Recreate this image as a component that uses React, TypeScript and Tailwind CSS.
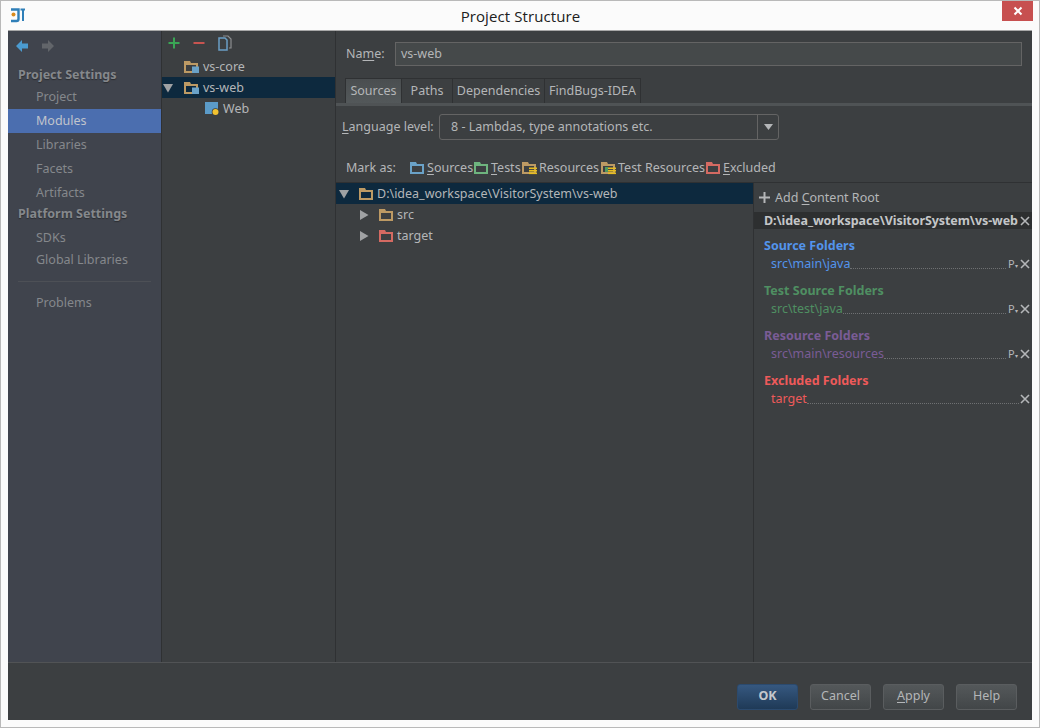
import React from "react";

const font = "[font-family:'Noto_Sans',sans-serif]";

function Folder({ color, kids }: { color: string; kids?: React.ReactNode }) {
  return (
    <svg width="16" height="14" viewBox="0 0 16 14" className="shrink-0">
      <path fillRule="evenodd" d="M0 1h6l1 2h7v10H0zM2 5v6h10V5z" fill={color} />
      {kids}
    </svg>
  );
}

const ModuleSquare = <rect x="8" y="6.5" width="7" height="6.5" fill="#6aa2c8" />;
const Stack = (
  <g fill="#e8bd20">
    <rect x="7" y="6.5" width="8" height="1.6" />
    <rect x="7" y="9" width="8" height="1.6" />
    <rect x="7" y="11.5" width="8" height="1.6" />
  </g>
);

function X({ className = "" }: { className?: string }) {
  return (
    <svg width="10" height="10" viewBox="0 0 10 10" className={"shrink-0 " + className}>
      <path d="M1 1l8 8M9 1l-8 8" stroke="#b4b6b8" strokeWidth="1.6" />
    </svg>
  );
}

function Arrow({ down = false }: { down?: boolean }) {
  return (
    <svg width="10" height="10" viewBox="0 0 10 10" className="shrink-0">
      {down ? <path d="M0 1h10L5 9.5z" fill="#a0a2a4" /> : <path d="M1 0v10L9.5 5z" fill="#a0a2a4" />}
    </svg>
  );
}

function U({ children }: { children: React.ReactNode }) {
  return <span className="underline underline-offset-2">{children}</span>;
}

function NavItem({ label, active }: { label: string; active?: boolean }) {
  return (
    <div className={"h-6 flex items-center pl-7 text-[12.5px] " + (active ? "bg-[#4b6eaf] text-[#c0c4cc]" : "text-[#85888c]")}>
      {label}
    </div>
  );
}

function Heading({ label }: { label: string }) {
  return (
    <div className="h-[21px] flex items-center pl-2.5 pt-[2px] text-[12.5px] font-bold text-[#85888c] [text-shadow:0_1px_1px_#2b2d31]">
      {label}
    </div>
  );
}

function Tab({ label, w, active }: { label: string; w: string; active?: boolean }) {
  return (
    <div
      className={
        "h-[25px] flex items-center justify-center border border-b-0 border-[#2f3133] -ml-px text-[12.5px] text-[#b4b6b8] " +
        w +
        (active ? " bg-gradient-to-b from-[#4a4e50] to-[#53585a]" : "")
      }
    >
      {label}
    </div>
  );
}

function Mark({ icon, children, w }: { icon: React.ReactNode; children: React.ReactNode; w: string }) {
  return (
    <div className={"flex items-center gap-[1px] " + w}>
      {icon}
      <span>{children}</span>
    </div>
  );
}

function FolderGroup({
  title,
  path,
  color,
  className,
  edit = true,
}: {
  title: string;
  path: string;
  color: string;
  className: string;
  edit?: boolean;
}) {
  return (
    <div className={"h-[45px] flex flex-col pl-[10px] pr-[2px] pt-[7px] " + className}>
      <div className={"h-[18px] flex items-center text-[12.5px] font-bold " + color}>{title}</div>
      <div className="h-[18px] flex items-center pl-[7px] text-[12.5px]">
        <span className={color}>{path}</span>
        <div className="flex-1 self-end mb-[4px] border-b border-dotted border-[#6e7072]" />
        {edit && (
          <span className="w-[13px] pb-[1px] text-[11px] leading-none text-[#b4b6b8] flex items-center pl-[2px]">
            P<span className="text-[6px] mt-1">▾</span>
          </span>
        )}
        <X className="ml-[1px] -mt-[1px]" />
      </div>
    </div>
  );
}

export default function App() {
  return (
    <div className={"w-[1040px] h-[728px] bg-[#fbfbfb] border border-[#b9b9b9] flex flex-col overflow-hidden " + font}>
      <div className="h-[29px] flex items-start shrink-0 relative">
        <svg width="16" height="16" viewBox="0 0 16 16" className="ml-[9px] mt-[6px]">
          <path d="M1 2.5h7.5V12q0 2-2 2H1" fill="none" stroke="#2f7fb8" strokeWidth="2.4" />
          <path d="M10.5 1.5H15v2h-1V14h-2V3.5h-1.5z" fill="#2f7fb8" />
          <circle cx="3.5" cy="7.5" r="2" fill="#d98a1c" />
        </svg>
        <div className="flex-1 text-center pt-[5px] pl-[13px] text-[15px] leading-[20px] tracking-[0.1px] text-[#202020] [font-family:'Open_Sans',sans-serif]">
          Project Structure
        </div>
        <div className="w-[31px] h-[20px] mr-[6px] bg-[#c75050] flex items-center justify-center">
          <svg width="10" height="10" viewBox="0 0 10 10">
            <path d="M1.5 1.5l7 7M8.5 1.5l-7 7" stroke="#fff" strokeWidth="2" />
          </svg>
        </div>
      </div>

      <div className="mx-[7px] mb-[7px] flex-1 min-h-0 flex flex-col bg-[#3c3f41] border-t border-[#a8a8a8] text-[#b4b6b8]">
        <div className="flex-1 min-h-0 flex">
          {/* settings nav */}
          <div className="w-[153px] bg-[#40444d] shrink-0 flex flex-col pt-[6px]">
            <div className="h-[17px] flex items-center gap-[12px] pl-[7px]">
              <svg width="14" height="14" viewBox="0 0 14 14">
                <path d="M7 1L1 7l6 6V9.5h6v-5H7z" fill="#4b9bd0" />
              </svg>
              <svg width="14" height="14" viewBox="0 0 14 14">
                <path d="M7 1l6 6-6 6V9.5H1v-5h6z" fill="#62656a" />
              </svg>
            </div>
            <div className="h-[10px]" />
            <Heading label="Project Settings" />
            <NavItem label="Project" />
            <NavItem label="Modules" active />
            <NavItem label="Libraries" />
            <NavItem label="Facets" />
            <NavItem label="Artifacts" />
            <div className="-mt-[2px]" />
            <Heading label="Platform Settings" />
            <div className="h-[2px]" />
            <NavItem label="SDKs" />
            <div className="-mt-[2px]" />
            <NavItem label="Global Libraries" />
            <div className="mx-[10px] mt-[9px] mb-[9px] border-t border-[#4d5056]" />
            <NavItem label="Problems" />
          </div>

          {/* modules */}
          <div className="w-[175px] shrink-0 border-x border-[#2f3133] flex flex-col">
            <div className="h-[25px] flex items-center pl-[5px] pb-[2px] gap-[11px] shrink-0">
              <svg width="14" height="14" viewBox="0 0 14 14">
                <path d="M7 1.5v11M1.5 7h11" stroke="#3aa655" strokeWidth="2" />
              </svg>
              <svg width="14" height="14" viewBox="0 0 14 14">
                <path d="M1.5 7h11" stroke="#c75450" strokeWidth="2" />
              </svg>
              <svg width="16" height="16" viewBox="0 0 16 16">
                <path d="M6 1h5l3 3v9h-2" fill="none" stroke="#8c8e90" strokeWidth="1.2" />
                <path d="M2 3h6l2 2v10H2z" fill="none" stroke="#6a9fc5" strokeWidth="1.5" />
              </svg>
            </div>
            <div className="h-[21px] flex items-center pl-[22px] gap-[2px] text-[12.5px]">
              <Folder color="#bd9a64" kids={ModuleSquare} />
              <span className="pt-[2px] ml-[1px]">vs-core</span>
            </div>
            <div className="h-[21px] flex items-center pl-[1px] bg-[#0d293e] text-[12.5px]">
              <Arrow down />
              <span className="w-[11px]" />
              <Folder color="#bd9a64" kids={ModuleSquare} />
              <span className="ml-[3px] pt-[2px]">vs-web</span>
            </div>
            <div className="h-[21px] flex items-center pl-[43px] gap-[3px] text-[12.5px]">
              <svg width="15" height="14" viewBox="0 0 15 14" className="shrink-0">
                <rect x="0" y="0" width="13" height="12" fill="#5b9bc8" />
                <circle cx="10.5" cy="10" r="3.8" fill="#3c3f41" />
                <circle cx="10.5" cy="10" r="3" fill="#f2c230" />
              </svg>
              <span className="pt-[2px]">Web</span>
            </div>
          </div>

          {/* details */}
          <div className="flex-1 min-w-0 flex flex-col">
            <div className="h-[24px] mt-[11px] ml-[10px] mr-[10px] flex items-center text-[12.5px] shrink-0">
              <span className="w-[49px]">
                Na<U>m</U>e:
              </span>
              <div className="flex-1 h-full border border-[#646464] bg-[#45494a] flex items-center pl-[5px]">vs-web</div>
            </div>
            <div className="h-[12px] shrink-0" />
            <div className="flex pl-[10px] border-b-[3px] border-[#4f5355] shrink-0">
              <Tab label="Sources" w="w-[57px]" active />
              <Tab label="Paths" w="w-[52px]" />
              <Tab label="Dependencies" w="w-[93px]" />
              <Tab label="FindBugs-IDEA" w="w-[97px]" />
            </div>
            <div className="h-[26px] mt-[8px] pl-[6px] flex items-center text-[12.5px] shrink-0">
              <span className="w-[97px]">
                <U>L</U>anguage level:
              </span>
              <div className="w-[340px] h-full border border-[#646464] rounded-[3px] flex items-center">
                <span className="flex-1 pl-[11px]">8 - Lambdas, type annotations etc.</span>
                <span className="w-[21px] h-full border-l border-[#646464] flex items-center justify-center">
                  <svg width="9" height="6" viewBox="0 0 9 6">
                    <path d="M0 0h9L4.5 6z" fill="#b4b6b8" />
                  </svg>
                </span>
              </div>
            </div>
            <div className="h-[28px] mt-[14px] pl-[10px] flex items-center text-[12.5px] shrink-0">
              <span className="w-[64px] shrink-0">Mark as:</span>
              <div className="flex items-center whitespace-nowrap">
                <Mark w="w-[64px]" icon={<Folder color="#6aa2c8" />}>
                  <U>S</U>ources
                </Mark>
                <Mark w="w-[48px]" icon={<Folder color="#6eb47e" />}>
                  <U>T</U>ests
                </Mark>
                <Mark w="w-[79px]" icon={<Folder color="#bd9a64" kids={Stack} />}>
                  Resources
                </Mark>
                <Mark
                  w="w-[105px]"
                  icon={
                    <Folder
                      color="#bd9a64"
                      kids={
                        <>
                          <rect x="4" y="6" width="3" height="5" fill="#4f9a5e" />
                          {Stack}
                        </>
                      }
                    />
                  }
                >
                  Test Resources
                </Mark>
                <Mark w="w-[70px]" icon={<Folder color="#d46a62" />}>
                  <U>E</U>xcluded
                </Mark>
              </div>
            </div>
            <div className="flex-1 min-h-0 flex border-t border-[#2f3133]">
              <div className="w-[418px] shrink-0 border-r border-[#2f3133] flex flex-col text-[12.5px]">
                <div className="h-[21px] bg-[#0d293e] flex items-center pl-[3px]">
                  <Arrow down />
                  <span className="w-[10px]" />
                  <Folder color="#bd9a64" />
                  <span className="ml-[2px] pt-[2px]">D:\idea_workspace\VisitorSystem\vs-web</span>
                </div>
                <div className="h-[21px] flex items-center pl-[23px]">
                  <Arrow />
                  <span className="w-[10px]" />
                  <Folder color="#bd9a64" />
                  <span className="ml-[2px] pt-[2px]">src</span>
                </div>
                <div className="h-[21px] flex items-center pl-[23px]">
                  <Arrow />
                  <span className="w-[10px]" />
                  <Folder color="#d46a62" />
                  <span className="ml-[2px] pt-[2px]">target</span>
                </div>
              </div>
              <div className="flex-1 min-w-0 flex flex-col text-[12.5px]">
                <div className="h-[29px] flex items-center pl-[5px] gap-[5px]">
                  <svg width="11" height="11" viewBox="0 0 11 11">
                    <path d="M5.5 0v11M0 5.5h11" stroke="#b4b6b8" strokeWidth="2" />
                  </svg>
                  <span className="pt-[2px]">
                    Add <U>C</U>ontent Root
                  </span>
                </div>
                <div className="h-[17px] bg-[#2d2f30] flex items-center pl-[10px] pr-[2px] justify-between font-bold text-[#c4c6c8] whitespace-nowrap overflow-hidden">
                  <span className="pt-[2px] tracking-[-0.08px]">D:\idea_workspace\VisitorSystem\vs-web</span>
                  <X />
                </div>
                <FolderGroup title="Source Folders" path="src\main\java" color="text-[#5394ec]" className="mt-[1px]" />
                <FolderGroup title="Test Source Folders" path="src\test\java" color="text-[#4f8f62]" className="" />
                <FolderGroup title="Resource Folders" path="src\main\resources" color="text-[#7a5c96]" className="" />
                <FolderGroup title="Excluded Folders" path="target" color="text-[#ee5a5a]" className="" edit={false} />
              </div>
            </div>
          </div>
        </div>

        {/* footer */}
        <div className="h-[58px] shrink-0 border-t border-[#515355] flex items-center justify-end gap-[12px] pr-[15px] pt-[10px] text-[12.5px]">
          <div className="w-[61px] h-[26px] rounded-[3px] border border-[#2b4a6e] bg-gradient-to-b from-[#365880] to-[#1f3a57] flex items-center justify-center font-bold text-[#c4c8cc]">
            OK
          </div>
          <div className="w-[61px] h-[26px] rounded-[3px] border border-[#5a5d5f] bg-gradient-to-b from-[#54585a] to-[#424648] flex items-center justify-center">
            Cancel
          </div>
          <div className="w-[61px] h-[26px] rounded-[3px] border border-[#5a5d5f] bg-gradient-to-b from-[#54585a] to-[#424648] flex items-center justify-center">
            <span>
              <U>A</U>pply
            </span>
          </div>
          <div className="w-[61px] h-[26px] rounded-[3px] border border-[#5a5d5f] bg-gradient-to-b from-[#54585a] to-[#424648] flex items-center justify-center">
            Help
          </div>
        </div>
      </div>
    </div>
  );
}
